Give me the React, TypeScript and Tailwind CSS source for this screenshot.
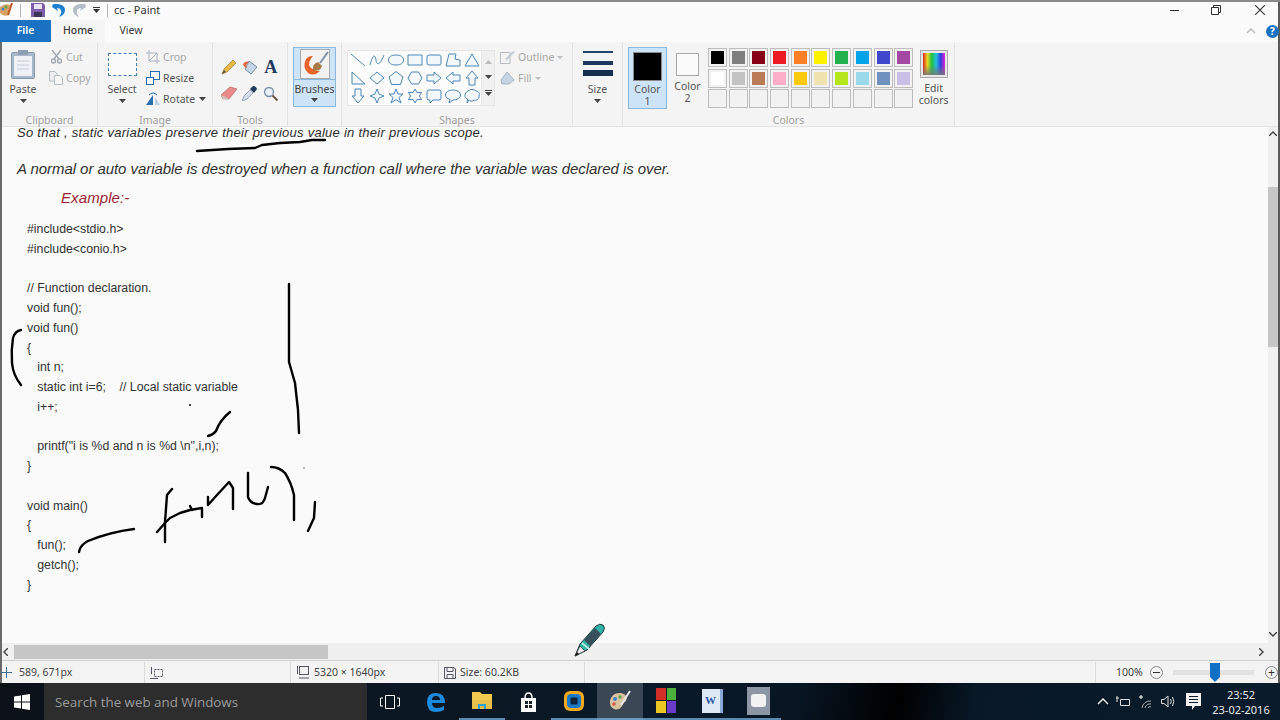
import React from 'react';

const row1 = ['#000000', '#7f7f7f', '#880015', '#ed1c24', '#ff7f27', '#fff200', '#22b14c', '#00a2e8', '#3f48cc', '#a349a4'];
const row2 = ['#ffffff', '#c3c3c3', '#b97a57', '#ffaec9', '#ffc90e', '#efe4b0', '#b5e61d', '#99d9ea', '#7092be', '#c8bfe7'];
const row3 = Array(10).fill('#f2f2f2');

const shapes = [
  'M1 2 L15 14',
  'M1 13 C4 2 6 2 7 8 C8 14 11 13 15 3',
  'M8 3 C13 3 15.5 5 15.5 8 C15.5 11 13 13 8 13 C3 13 .5 11 .5 8 C.5 5 3 3 8 3 Z',
  'M1 3 H15 V13 H1 Z',
  'M3 3 H13 Q15 3 15 5 V11 Q15 13 13 13 H3 Q1 13 1 11 V5 Q1 3 3 3 Z',
  'M1 14 L4 2 H11 L10 7 L15 8 L15 14 Z',
  'M8 2 L15 14 H1 Z',
  'M2 2 L15 14 H2 Z',
  'M8 2 L15 8 L8 14 L1 8 Z',
  'M8 1.5 L15 7 L12.5 14.5 H3.5 L1 7 Z',
  'M4.5 2 H11.5 L15 8 L11.5 14 H4.5 L1 8 Z',
  'M1 5 H8 V2 L15 8 L8 14 V11 H1 Z',
  'M15 5 H8 V2 L1 8 L8 14 V11 H15 Z',
  'M5 15 V8 H2 L8 1 L14 8 H11 V15 Z',
  'M5 1 V8 H2 L8 15 L14 8 H11 V1 Z',
  'M8 1 L10 6 L15 8 L10 10 L8 15 L6 10 L1 8 L6 6 Z',
  'M8 1 L10 6 H15 L11 9.5 L13 15 L8 11.5 L3 15 L5 9.5 L1 6 H6 Z',
  'M8 1 L10 4.5 H14.5 L12.5 8 L14.5 11.5 H10 L8 15 L6 11.5 H1.5 L3.5 8 L1.5 4.5 H6 Z',
  'M3 2 H13 Q15 2 15 4 V10 Q15 12 13 12 H7 L4 15 V12 H3 Q1 12 1 10 V4 Q1 2 3 2 Z',
  'M8 2 C12 2 15.5 4 15.5 7 C15.5 10 12 12 8 12 L4 15 L5 11.5 C2 10.5 .5 9 .5 7 C.5 4 4 2 8 2 Z',
  'M4 3 C6 1 10 1 12 3 C15 3 16 6 15 8 C16 11 12 13 10 12 C8 14 6 13 5 12 L3 15 L3.5 11 C0 10 0 5 4 3 Z',
];

const Caret = ({ className = '' }: { className?: string }) => (
  <svg width="7" height="4" viewBox="0 0 7 4" className={className}>
    <path d="M0 0 H7 L3.5 4 Z" fill="#444" />
  </svg>
);

const Group = ({ width, label, children }: { width: string; label: string; children: React.ReactNode }) => (
  <div className={`${width} shrink-0 flex flex-col border-r border-[#e2e2e2]`}>
    <div className="h-[71px] flex">{children}</div>
    <div className="h-[12px] text-center text-[10.5px] leading-[12px] text-[#a0a0a0]">{label}</div>
  </div>
);

const Swatch = ({ c }: { c: string }) => (
  <div className="w-[19px] h-[19px] border border-[#bdbdbd] bg-[#f2f2f2] p-[2px]">
    <div className="w-full h-full" style={{ backgroundColor: c }} />
  </div>
);

const PenCursor = () => (
  <svg width="32" height="34" viewBox="0 0 32 34">
    <path d="M1 33 L6 21 L22 3 Q26 0 29 2 Q32 5 29 9 L13 27 Z" fill="#2fb3a6" stroke="#1d3a3a" strokeWidth="1" />
    <path d="M10 17 L21 5 L27 11 L16 23 Z" fill="#38505a" />
    <path d="M8 20 L15 26" stroke="#b7e6de" strokeWidth="2" />
    <path d="M1 33 L6 23 L11 28 Z" fill="#e8e8e8" stroke="#333" strokeWidth=".8" />
    <path d="M1 33 L3 29 L5 31 Z" fill="#111" />
  </svg>
);

export default function App() {
  return (
    <div className="relative w-[1280px] h-[720px] overflow-hidden flex flex-col bg-[#fafafa] font-['Noto_Sans',sans-serif] text-[#555]">
      <div className="h-[2px] bg-[#8a8a8a]" />
      <div className="flex-1 min-h-0 flex flex-col border-l-2 border-l-[#6a6a6a] border-r-2 border-r-[#5a5a5a]">
        {/* title bar */}
        <div className="h-[18px] flex items-center bg-[#fbfbfb] -ml-[2px] pb-[2px]">
          <svg width="14" height="14" viewBox="0 0 14 14" className="ml-0">
            <path d="M0 4 Q5 0 10 2 L9 12 Q3 14 0 10 Z" fill="#d9a066" />
            <circle cx="3" cy="6" r="1.5" fill="#3b82c4" />
            <circle cx="6" cy="4" r="1.5" fill="#5aa845" />
            <path d="M8 12 L12 0" stroke="#c0562b" strokeWidth="2" />
          </svg>
          <div className="ml-[6px] w-px h-[13px] bg-[#b0b0b0]" />
          <svg width="14" height="14" viewBox="0 0 14 14" className="ml-[10px]">
            <path d="M0 0 H12 L14 2 V14 H0 Z" fill="#7d5ea8" />
            <rect x="3" y="1" width="8" height="5" fill="#e9e4f2" />
            <rect x="3" y="9" width="8" height="5" fill="#3d3355" />
          </svg>
          <svg width="14" height="14" viewBox="0 0 14 14" className="ml-[7px]">
            <path d="M1 1 H6 Q13 2 13 7 Q13 12 7 14 Q10 10 9 7 Q8 5 5 5 L6 8 L0 4 Z" fill="#1f7fd0" />
          </svg>
          <svg width="14" height="14" viewBox="0 0 14 14" className="ml-[6px]">
            <path d="M13 1 H8 Q1 2 1 7 Q1 12 7 14 Q4 10 5 7 Q6 5 9 5 L8 8 L14 4 Z" fill="#b4bcc6" />
          </svg>
          <svg width="7" height="6" viewBox="0 0 7 6" className="ml-[7px]">
            <path d="M0 0 H7 V1 H0 Z M0 2 H7 L3.5 6 Z" fill="#333" />
          </svg>
          <div className="ml-[7px] w-px h-[13px] bg-[#b0b0b0]" />
          <span className="ml-[6px] text-[11px] leading-[16px] text-[#333]">cc - Paint</span>
          <div className="flex-1" />
          <div className="w-[9px] h-px bg-[#333] mr-[32px]" />
          <svg width="10" height="10" viewBox="0 0 10 10" className="mr-[34px]">
            <path d="M.5 2.5 H7.5 V9.5 H.5 Z M2.5 2.5 V.5 H9.5 V7.5 H7.5" fill="none" stroke="#333" />
          </svg>
          <svg width="10" height="10" viewBox="0 0 10 10" className="mr-[13px]">
            <path d="M0 0 L10 10 M10 0 L0 10" stroke="#333" strokeWidth="1.1" />
          </svg>
        </div>

        {/* tabs */}
        <div className="h-[22px] flex items-stretch bg-[#fbfbfb] text-[10.5px] -ml-[2px]">
          <div className="w-[51px] bg-[#1b72c2] text-white font-semibold flex items-center justify-center">File</div>
          <div className="w-[54px] bg-[#f5f5f5] text-[#3a3a3a] font-medium flex items-center justify-center">Home</div>
          <div className="w-[52px] text-[#3a3a3a] flex items-center justify-center">View</div>
          <div className="flex-1" />
          <svg width="10" height="6" viewBox="0 0 10 6" className="self-center mr-[10px]">
            <path d="M1 5 L5 1 L9 5" fill="none" stroke="#bbb" strokeWidth="1.5" />
          </svg>
          <div className="self-center w-[13px] h-[13px] rounded-full bg-[#1b72c2] text-white text-[10px] leading-[13px] text-center font-bold -mr-[1px]">?</div>
        </div>

        {/* ribbon */}
        <div className="h-[85px] flex bg-[#f4f4f4] border-b border-[#e4e4e4] pt-[1px] text-[10.5px] leading-[14px]">
          <Group width="w-[96px]" label="Clipboard">
            <div className="w-[42px] flex flex-col items-center pt-[7px]">
              <svg width="24" height="29" viewBox="0 0 24 29">
                <rect x=".5" y="2.5" width="23" height="26" rx="1" fill="#a9b9cc" stroke="#8899ad" />
                <rect x="3" y="6" width="18" height="20" fill="#eef1f5" />
                <rect x="7" y="0" width="10" height="5" fill="#8f9fb3" />
                <path d="M6 11 H18 M6 15 H18 M6 19 H18" stroke="#c5ccd6" />
              </svg>
              <span className="mt-[3px] text-[#555]">Paste</span>
              <Caret className="mt-[3px]" />
            </div>
            <div className="flex flex-col pt-[7px] gap-[7px] text-[#a8a8a8]">
              <div className="flex items-center gap-[3px] h-[14px] pl-[7px]">
                <svg width="11" height="14" viewBox="0 0 11 14">
                  <path d="M1 0 L8 9 M10 0 L3 9" stroke="#a0a8b2" strokeWidth="1.4" />
                  <circle cx="2.5" cy="11" r="2" fill="none" stroke="#a0a8b2" strokeWidth="1.4" />
                  <circle cx="8.5" cy="11" r="2" fill="none" stroke="#a0a8b2" strokeWidth="1.4" />
                </svg>
                <span className="ml-[1px]">Cut</span>
              </div>
              <div className="flex items-center gap-[3px] h-[14px] pl-[5px]">
                <svg width="14" height="14" viewBox="0 0 14 14">
                  <path d="M.5 .5 H6 L8 3 V10 H.5 Z" fill="#eee" stroke="#b5bdc6" />
                  <path d="M5.5 4.5 H11 L13.5 7 V13.5 H5.5 Z" fill="#f6f6f6" stroke="#b5bdc6" />
                </svg>
                <span>Copy</span>
              </div>
            </div>
          </Group>
          <Group width="w-[115px]" label="Image">
            <div className="w-[48px] flex flex-col items-center pt-[10px]">
              <div className="w-[29px] h-[23px] border border-dashed border-[#4a7fb5] bg-[#fbfbfb]" />
              <span className="mt-[6px] text-[#555]">Select</span>
              <Caret className="mt-[3px]" />
            </div>
            <div className="flex flex-col pt-[7px] gap-[7px]">
              <div className="flex items-center gap-[3px] h-[14px] text-[#a8a8a8]">
                <svg width="14" height="14" viewBox="0 0 14 14">
                  <path d="M3 0 V11 H14 M0 3 H11 V14 M3 11 L11 3" fill="none" stroke="#a9b4c0" />
                </svg>
                <span>Crop</span>
              </div>
              <div className="flex items-center gap-[3px] h-[14px] text-[#555]">
                <svg width="14" height="14" viewBox="0 0 14 14">
                  <rect x="4.5" y=".5" width="9" height="8" fill="#fff" stroke="#2a6db0" />
                  <rect x=".5" y="6.5" width="7" height="7" fill="#fff" stroke="#2a6db0" />
                </svg>
                <span>Resize</span>
              </div>
              <div className="flex items-center gap-[3px] h-[14px] text-[#555]">
                <svg width="14" height="14" viewBox="0 0 14 14">
                  <path d="M0 13 L7 3 V13 Z" fill="#2a6db0" />
                  <path d="M9 13 V5 L14 13 Z" fill="#bcd0e4" />
                  <path d="M3 3 Q7 -1 11 3" fill="none" stroke="#2a6db0" />
                </svg>
                <span>Rotate</span>
                <Caret className="ml-[1px]" />
              </div>
            </div>
          </Group>
          <Group width="w-[75px]" label="Tools">
            <div className="grid grid-cols-3 w-full pl-[6px] pr-[6px] pt-[11px] grid-rows-[26px_26px] justify-items-center items-center">
              <svg width="16" height="16" viewBox="0 0 16 16">
                <path d="M1 15 L3 10 L12 1 L15 4 L6 13 Z" fill="#e9b949" stroke="#9a7a30" strokeWidth=".7" />
                <path d="M1 15 L3 11 L5 13 Z" fill="#555" />
              </svg>
              <svg width="18" height="17" viewBox="0 0 18 17">
                <path d="M8 2 L16 8 L10 15 L4 10 Z" fill="#c6d6e6" stroke="#6f8aa5" />
                <path d="M5 9 Q0 6 4 3 Q6 2 8 3 L6 5 Q4 6 6 9 Z" fill="#e8643c" />
              </svg>
              <span className="font-['Liberation_Serif',serif] font-bold text-[18px] leading-[18px] text-[#1f3a5c]">A</span>
              <svg width="17" height="14" viewBox="0 0 17 14">
                <path d="M0 9 L9 1 L16 3 L8 13 L2 13 Z" fill="#ea8a8a" stroke="#b96464" strokeWidth=".7" />
                <path d="M0 9 L8 13 L2 13 Z" fill="#c8c8c8" />
              </svg>
              <svg width="15" height="15" viewBox="0 0 15 15">
                <path d="M0 15 L2 10 L8 4 L11 7 L5 13 Z" fill="#d5dee8" stroke="#7a8ea3" strokeWidth=".7" />
                <path d="M8 3 L11 0 Q14 0 15 3 L12 7 Z" fill="#1f3a5c" />
              </svg>
              <svg width="15" height="15" viewBox="0 0 15 15">
                <circle cx="6" cy="6" r="4.5" fill="#e8f0f8" stroke="#7a8ea3" strokeWidth="1.3" />
                <path d="M9.5 9.5 L14.5 14.5" stroke="#6a5a4a" strokeWidth="2" />
              </svg>
            </div>
          </Group>
          <Group width="w-[54px]" label="">
            <div className="ml-[5px] mt-[4px] w-[43px] h-[60px] border border-[#8db8de] bg-[#cde4f7] flex flex-col items-center">
              <div className="w-full h-[32px] border-b border-[#8db8de] flex items-center justify-center">
                <svg width="30" height="30" viewBox="0 0 30 30">
                  <rect x=".5" y=".5" width="29" height="29" fill="#f2f2f2" stroke="#aaa" />
                  <path d="M6 10 Q2 18 8 24 Q14 28 20 22 Q14 22 10 18 Q7 14 13 7 Q8 7 6 10 Z" fill="#e8632a" />
                  <path d="M13 21 Q12 15 18 13 L22 17 Q20 23 13 21 Z" fill="#a87a48" />
                  <path d="M20 14 L28 3" stroke="#8090a8" strokeWidth="2" />
                </svg>
              </div>
              <span className="mt-[2px] text-[#444]">Brushes</span>
              <Caret className="mt-[2px]" />
            </div>
          </Group>
          <Group width="w-[231px]" label="Shapes">
            <div className="mt-[7px] ml-[5px] h-[56px] flex border border-[#e6e6e6] bg-[#fcfcfc]">
              <div className="w-[133px] grid grid-cols-7 grid-rows-3 justify-items-center items-center">
                {shapes.map((d, i) => (
                  <svg key={i} width="16" height="16" viewBox="0 0 16 16">
                    <path d={d} fill={i < 2 ? 'none' : '#f3f8fc'} stroke="#4d86b8" strokeWidth="1" />
                  </svg>
                ))}
              </div>
              <div className="w-[13px] bg-[#f0f0f0] border-l border-[#e6e6e6] flex flex-col items-center justify-around py-[3px]">
                <svg width="7" height="4" viewBox="0 0 7 4"><path d="M0 4 H7 L3.5 0 Z" fill="#bbb" /></svg>
                <Caret />
                <svg width="7" height="6" viewBox="0 0 7 6"><path d="M0 0 H7 V1 H0 Z M0 2 H7 L3.5 6 Z" fill="#444" /></svg>
              </div>
            </div>
            <div className="ml-[5px] pt-[7px] flex flex-col gap-[7px] text-[#a8a8a8]">
              <div className="flex items-center gap-[3px] h-[14px]">
                <svg width="15" height="14" viewBox="0 0 15 14">
                  <path d="M.5 2.5 H10 V13.5 H.5 Z" fill="#f4f4f4" stroke="#b5bdc6" />
                  <path d="M5 9 L13 1 L14.5 2.5 L6.5 10.5 Z" fill="#c5ccd6" />
                </svg>
                <span>Outline</span>
                <svg width="6" height="3" viewBox="0 0 6 3"><path d="M0 0 H6 L3 3 Z" fill="#bbb" /></svg>
              </div>
              <div className="flex items-center gap-[3px] h-[14px]">
                <svg width="15" height="14" viewBox="0 0 15 14">
                  <path d="M7 1 L14 9 L9 13 H2 L1 9 Z" fill="#c5d3e2" stroke="#a9b4c0" />
                </svg>
                <span>Fill</span>
                <svg width="6" height="3" viewBox="0 0 6 3"><path d="M0 0 H6 L3 3 Z" fill="#bbb" /></svg>
              </div>
            </div>
          </Group>
          <Group width="w-[50px]" label="">
            <div className="w-full flex flex-col items-center pt-[8px]">
              <div className="w-[30px] h-[2px] bg-[#24476e]" />
              <div className="w-[30px] h-[4px] bg-[#1d3a5e] mt-[8px]" />
              <div className="w-[30px] h-[6px] bg-[#162f4f] mt-[5px]" />
              <span className="mt-[6px] text-[#555]">Size</span>
              <Caret className="mt-[3px]" />
            </div>
          </Group>
          <Group width="w-[332px]" label="Colors">
            <div className="ml-[5px] mt-[4px] w-[39px] h-[62px] bg-[#cde4f7] border border-[#8db8de] flex flex-col items-center pt-[4px] text-[#555] text-center">
              <div className="w-[29px] h-[29px] bg-black border border-[#8a8a8a] shrink-0" />
              <span className="mt-[2px] leading-[12px]">Color<br />1</span>
            </div>
            <div className="w-[41px] flex flex-col items-center pt-[10px] text-[#555] text-center">
              <div className="w-[23px] h-[23px] bg-[#fbfbfb] border border-[#a8a8a8] shrink-0" />
              <span className="mt-[4px] leading-[12px]">Color<br />2</span>
            </div>
            <div className="mt-[5px] grid grid-cols-10 gap-x-[1.7px] gap-y-[1.5px] h-fit">
              {[...row1, ...row2, ...row3].map((c, i) => (
                <Swatch key={i} c={c} />
              ))}
            </div>
            <div className="flex-1 flex flex-col items-center pt-[7px] text-[#555] text-center">
              <div className="w-[28px] h-[28px] border border-[#a8a8a8] p-[2px] bg-[#e8e8e8] shrink-0">
                <div className="w-full h-full bg-[linear-gradient(180deg,rgba(255,255,255,0)_55%,rgba(120,120,120,.9)_100%),linear-gradient(90deg,#e02020,#e8d820,#20c040,#20c0e0,#3040e0,#e020d0)]" />
              </div>
              <span className="mt-[4px] leading-[12px]">Edit<br />colors</span>
            </div>
          </Group>
          <div className="flex-1" />
        </div>

        {/* canvas area */}
        <div className="flex-1 min-h-0 flex bg-[#fafafa]">
          <div className="flex-1 min-w-0 font-['Liberation_Sans',sans-serif] text-[#2c2c2c]">
            <p className="ml-[15px] italic text-[13px] leading-[12px] tracking-[0.26px] text-[#2c2c2c] whitespace-nowrap">So that , static variables preserve their previous value in their previous scope.</p>
            <p className="mt-[20px] ml-[15px] italic text-[15px] leading-[20px] tracking-[-0.06px] text-[#333] whitespace-nowrap">A normal or auto variable is destroyed when a function call where the variable was declared is over.</p>
            <p className="mt-[9px] ml-[59px] italic text-[15px] leading-[20px] tracking-[0.1px] text-[#9e1f35]">Example:-</p>
            <pre className="mt-[12px] ml-[25px] font-['Liberation_Sans',sans-serif] text-[12.3px] leading-[19.75px] text-[#333]">{`#include<stdio.h>
#include<conio.h>

// Function declaration.
void fun();
void fun()
{
   int n;
   static int i=6;    // Local static variable
   i++;

   printf("i is %d and n is %d \\n",i,n);
}

void main()
{
   fun();
   getch();
}`}</pre>
          </div>
          {/* vertical scrollbar */}
          <div className="w-[10px] bg-[#f0f0f0] flex flex-col items-center pt-[4px] pb-[6px]">
            <svg width="8" height="5" viewBox="0 0 8 5" className="shrink-0"><path d="M0 5 L4 1 L8 5" fill="none" stroke="#444" strokeWidth="1.4" /></svg>
            <div className="w-full h-[160px] bg-[#c6c6c6] mt-[51px] shrink-0" />
            <div className="flex-1" />
            <svg width="8" height="5" viewBox="0 0 8 5" className="shrink-0"><path d="M0 0 L4 4 L8 0" fill="none" stroke="#444" strokeWidth="1.4" /></svg>
          </div>
        </div>

        {/* horizontal scrollbar */}
        <div className="h-[17px] flex items-center bg-[#f0f0f0]">
          <svg width="5" height="8" viewBox="0 0 5 8" className="ml-[1px] shrink-0"><path d="M5 0 L1 4 L5 8" fill="none" stroke="#444" strokeWidth="1.4" /></svg>
          <div className="ml-[6px] w-[314px] h-[14px] bg-[#c6c6c6]" />
          <div className="flex-1" />
          <svg width="5" height="8" viewBox="0 0 5 8" className="mr-[14px] shrink-0"><path d="M0 0 L4 4 L0 8" fill="none" stroke="#444" strokeWidth="1.4" /></svg>
        </div>

        {/* status bar */}
        <div className="h-[23px] flex items-stretch bg-[#f3f3f3] border-t border-[#cfcfcf] text-[10.5px] text-[#444] pt-[1px]">
          <div className="w-[143px] border-r border-[#dcdcdc] flex items-center gap-[7px]">
            <svg width="11" height="11" viewBox="0 0 11 11" className="shrink-0 -ml-[1px]"><path d="M5.5 0 V11 M0 5.5 H11" stroke="#3f6a94" /></svg>
            <span>589, 671px</span>
          </div>
          <div className="w-[146px] border-r border-[#dcdcdc] flex items-center pl-[5px]">
            <svg width="14" height="13" viewBox="0 0 14 13"><path d="M4.5 3.5 H12.5 V10.5 H4.5 Z" fill="none" stroke="#556" strokeDasharray="2 1" /><path d="M1.5 1 V8 M0 12.5 H8" stroke="#556" /></svg>
          </div>
          <div className="w-[148px] border-r border-[#dcdcdc] flex items-center pl-[5px] gap-[4px]">
            <svg width="14" height="13" viewBox="0 0 14 13"><rect x="3.5" y=".5" width="9" height="8" fill="none" stroke="#556" /><path d="M1.5 0 V8 M3 12 H13" stroke="#556" /></svg>
            <span>5320 × 1640px</span>
          </div>
          <div className="w-[146px] border-r border-[#dcdcdc] flex items-center pl-[5px] gap-[4px]">
            <svg width="12" height="12" viewBox="0 0 12 12"><path d="M.5 .5 H10 L11.5 2 V11.5 H.5 Z M3 .5 V4.5 H9 V.5 M3 11.5 V7.5 H9 V11.5" fill="none" stroke="#556" /></svg>
            <span>Size: 60.2KB</span>
          </div>
          <div className="w-[511px] border-r border-[#dcdcdc]" />
          <div className="flex-1 flex items-center pl-[20px]">
            <span className="w-[27px]">100%</span>
            <div className="ml-[7px] w-[13px] h-[13px] rounded-full border border-[#888] flex items-center justify-center">
              <div className="w-[7px] h-px bg-[#333]" />
            </div>
            <div className="relative ml-[10px] w-[81px] h-[5px] bg-[#e2e2e2]">
              <svg width="10" height="19" viewBox="0 0 10 19" className="absolute left-[37px] -top-[7px]"><path d="M0 0 H10 V14 L5 19 L0 14 Z" fill="#1270c4" /></svg>
            </div>
            <div className="ml-[11px] w-[13px] h-[13px] rounded-full border border-[#888] flex items-center justify-center text-[12px] leading-none text-[#333]">+</div>
          </div>
        </div>
      </div>

      {/* taskbar */}
      <div className="h-[37px] flex items-center bg-[linear-gradient(100deg,#0c1118_0%,#0a1a28_50%,#081624_62%,#000_70%,#081826_76%,#0a1c2c_100%)] text-white">
        <div className="w-[44px] flex justify-center">
          <svg width="16" height="16" viewBox="0 0 16 16"><path d="M0 2.5 L7 1.5 V7.5 H0 Z M8 1.3 L16 0 V7.5 H8 Z M0 8.5 H7 V14.5 L0 13.5 Z M8 8.5 H16 V16 L8 14.7 Z" fill="#fff" /></svg>
        </div>
        <div className="w-[323px] h-full bg-[#2d2d2d] flex items-center pl-[11px] pt-[1px] text-[13.35px] text-[#9c9c9c] font-['Open_Sans',sans-serif]">Search the web and Windows</div>
        <div className="w-[46px] flex justify-center">
          <svg width="20" height="14" viewBox="0 0 20 14"><path d="M5.5 .5 H14.5 V13.5 H5.5 Z M3 3 H.5 V11 H3 M17 3 H19.5 V11 H17" fill="none" stroke="#fff" /></svg>
        </div>
        <div className="w-[46px] flex justify-center">
          <svg width="20" height="20" viewBox="0 0 20 20"><path d="M1 10 Q1 1 10 1 Q19 1 19 11 H6 Q6 16 11 16 Q15 16 18 14 V18 Q14 20 10 20 Q1 20 1 10 Z M6 8 H14 Q14 4 10 4 Q6 4 6 8 Z" fill="#1b8be0" fillRule="evenodd" /></svg>
        </div>
        <div className="w-[46px] h-full flex items-center justify-center border-b-2 border-b-[#5a8ab0]">
          <svg width="20" height="17" viewBox="0 0 20 17"><path d="M0 0 H8 L10 2 H20 V17 H0 Z" fill="#f0c94e" /><rect x="0" y="8" width="20" height="9" fill="#e6c04a" /><path d="M6 12 H14 V17 H12 V14 H8 V17 H6 Z" fill="#2d9fd8" /></svg>
        </div>
        <div className="w-[46px] flex justify-center">
          <svg width="17" height="20" viewBox="0 0 17 20"><path d="M1 6 H16 V20 H1 Z" fill="#fff" /><path d="M5 6 Q5 1 8.5 1 Q12 1 12 6" fill="none" stroke="#fff" strokeWidth="1.5" /><path d="M5 9 H8 V12 H5 Z M9 9 H12 V12 H9 Z M5 13 H8 V16 H5 Z M9 13 H12 V16 H9 Z" fill="#1a2430" /></svg>
        </div>
        <div className="w-[46px] h-full flex items-center justify-center border-b-2 border-b-[#5a8ab0]">
          <svg width="20" height="20" viewBox="0 0 20 20"><rect x="0" y="0" width="20" height="20" rx="6" fill="#f0a81e" /><rect x="3" y="3" width="14" height="14" rx="4" fill="#1878c8" /><rect x="6.5" y="6.5" width="7" height="7" rx="1" fill="#0c2238" /></svg>
        </div>
        <div className="w-[46px] h-full bg-[#3a4754] flex items-center justify-center border-b-2 border-b-[#6a9ac0]">
          <svg width="22" height="22" viewBox="0 0 22 22"><path d="M1 11 Q3 2 12 3 Q20 5 17 11 Q14 13 13 16 Q10 21 5 19 Q0 16 1 11 Z" fill="#d9c3a0" /><circle cx="6" cy="9" r="2" fill="#3b82c4" /><circle cx="11" cy="7" r="1.7" fill="#5aa845" /><circle cx="5" cy="14" r="1.7" fill="#d2553a" /><path d="M12 15 L21 1" stroke="#e8e8e8" strokeWidth="2" /></svg>
        </div>
        <div className="w-[46px] h-full flex items-center justify-center border-b-2 border-b-[#5a8ab0]">
          <div className="w-[20px] h-[25px] grid grid-cols-2 grid-rows-2 gap-[1px]">
            <div className="bg-[#d22f27]" />
            <div className="bg-[#4caf3c]" />
            <div className="bg-[#e8c820]" />
            <div className="bg-[#6a3ac8]" />
          </div>
        </div>
        <div className="w-[46px] h-full flex items-center justify-center border-b-2 border-b-[#5a8ab0]">
          <div className="w-[21px] h-[24px] bg-[#dfe8f5] border-r-[3px] border-r-[#8aa8d8] flex items-center justify-center text-[11px] font-bold text-[#2a5aa8] font-['Liberation_Serif',serif]">W</div>
        </div>
        <div className="w-[46px] h-full flex items-center justify-center border-b-2 border-b-[#5a8ab0]">
          <div className="w-[23px] h-[28px] bg-[#8c96a4] flex items-center justify-center">
            <div className="w-[15px] h-[13px] rounded-[3px] bg-[#f2f2f2]" />
          </div>
        </div>
        <div className="flex-1" />
        <div className="flex items-center">
          <svg width="12" height="7" viewBox="0 0 12 7" className="mr-[7px]"><path d="M1 6 L6 1 L11 6" fill="none" stroke="#fff" strokeWidth="1.3" /></svg>
          <svg width="14" height="12" viewBox="0 0 14 12" className="mr-[9px]"><path d="M4.5 3.5 H13.5 V9.5 H4.5 Z M1 0 V6 M0 2 H3" fill="none" stroke="#ddd" /></svg>
          <svg width="13" height="14" viewBox="0 0 13 14" className="mr-[9px]"><path d="M3 13 A8 8 0 0 1 12 6 M6 13 A5 5 0 0 1 12 9 M9 13 A2 2 0 0 1 12 12" fill="none" stroke="#aaa" /><path d="M2 0 V4 M0 2 H4" stroke="#fff" /></svg>
          <svg width="15" height="13" viewBox="0 0 15 13" className="mr-[10px]"><path d="M.5 4.5 H3 L7 1 V12 L3 8.5 H.5 Z M9.5 4 Q11 6.5 9.5 9 M11.5 2 Q14 6.5 11.5 11" fill="none" stroke="#ddd" /></svg>
          <svg width="15" height="17" viewBox="0 0 15 17" className="mr-[9px]"><path d="M0 0 H15 V13 H9 L6 17 V13 H0 Z" fill="#f2f2f2" /><path d="M3 3.5 H12 M3 6.5 H12 M3 9.5 H12" stroke="#0a1c2c" /></svg>
          <div className="w-[62px] mr-[8px] flex flex-col items-center text-[11px] leading-[15px] text-[#e8e8e8] whitespace-nowrap">
            <span>23:52</span>
            <span>23-02-2016</span>
          </div>
        </div>
      </div>

      {/* pen strokes drawn on the picture */}
      <svg className="absolute left-0 top-0 pointer-events-none" width="1280" height="720" viewBox="0 0 1280 720">
        <g fill="none" stroke="#000" strokeWidth="2.4" strokeLinecap="round" strokeLinejoin="round">
          <path d="M197 151 L228 149 L255 148 L262 145 L280 143 L300 142 L312 140 L325 140" />
          <path d="M21 330 Q15 331 13 338 Q11 350 12 363 Q13 375 21 385" />
          <path d="M289 284 L289 362 L295 383 L298 410 L299 433" />
          <path d="M208 436 Q213 435 216 431 Q220 420 230 412" />
          <path d="M79 552 Q80 545 88 541 Q110 532 134 529" />
          <path d="M172 489 L167 495 L165 522 L165 542" />
          <path d="M157 532 L165 523 L170 518 L180 513 L190 510 L202 508 L202 517" />
          <path d="M190 506 L192 510" />
          <path d="M208 497 L208 505 L217 495 L229 482 L233 488 L233 509" />
          <path d="M248 473 L248 497 Q250 503 257 504 Q263 505 265 498 L268 487" />
          <path d="M271 467 Q279 467 285 473 Q291 482 294 495 L294 520" />
          <path d="M315 502 L314 518 L308 531" />
        </g>
        <circle cx="190" cy="405" r="1" fill="#000" />
        <circle cx="304" cy="468" r=".7" fill="#444" />
      </svg>

      {/* mouse cursor */}
      <div className="absolute left-[574px] top-[623px]">
        <PenCursor />
      </div>
    </div>
  );
}
